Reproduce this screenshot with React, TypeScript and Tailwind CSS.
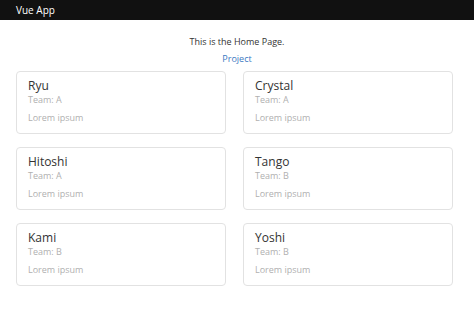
import React from "react";

const people = [
  { name: "Ryu", team: "A" },
  { name: "Crystal", team: "A" },
  { name: "Hitoshi", team: "A" },
  { name: "Tango", team: "B" },
  { name: "Kami", team: "B" },
  { name: "Yoshi", team: "B" },
];

export default function App() {
  return (
    <div className="min-h-[319px] bg-white" style={{ fontFamily: '"Open Sans", "Noto Sans", sans-serif' }}>
      <header className="h-[20px] bg-[#111111] flex items-center px-[16px]">
        <span className="text-white text-[10px] leading-none">Vue App</span>
      </header>
      <div className="flex flex-col items-center pt-[16px]">
        <p className="text-[9px] leading-[12px] text-[#333]">This is the Home Page.</p>
        <a className="text-[9px] leading-[12px] text-[#3b78c2] mt-[5px]">Project</a>
      </div>
      <div className="grid grid-cols-[210px_210px] gap-x-[17px] gap-y-[13px] pl-[16px] mt-[6px]">
        {people.map((p) => (
          <div key={p.name} className="h-[63px] border border-[#e2e2e2] rounded-[4px] pl-[11px] pt-[6px]">
            <div className="text-[12px] leading-[16px] text-[#333]">{p.name}</div>
            <div className="text-[9px] leading-[12px] text-[#b0b0b0]">Team: {p.team}</div>
            <div className="text-[9px] leading-[12px] text-[#b0b0b0] mt-[6px]">Lorem ipsum</div>
          </div>
        ))}
      </div>
    </div>
  );
}
